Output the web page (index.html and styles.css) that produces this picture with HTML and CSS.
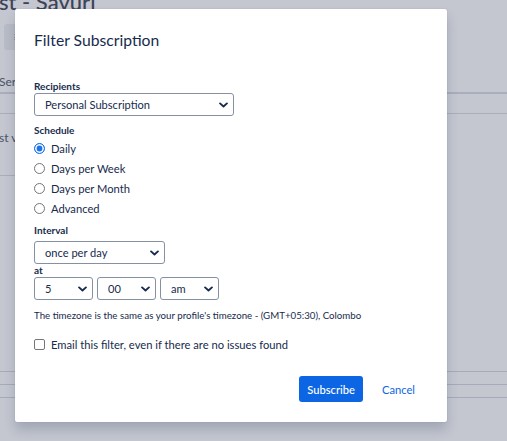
FILE: index.html
```html
<!DOCTYPE html>
<html lang="en">
<head>
<meta charset="utf-8">
<title>Filter Subscription</title>
<link rel="stylesheet" href="styles.css">
</head>
<body>
<div class="page">
  <h1 class="page-title">st - Savuri</h1>
  <div class="toolbar"><span class="tool-btn">&#8801;</span></div>
  <div class="tabs"><span class="tab">Ser</span></div>
  <div class="sub-bar"></div>
  <div class="left-col">
    <p class="left-text">st v</p>
  </div>
  <div class="table-lines">
    <div class="tline"></div>
    <div class="tline"></div>
    <div class="tline"></div>
  </div>
</div>

<div class="modal" role="dialog" aria-labelledby="modal-title">
  <h2 class="modal-title" id="modal-title">Filter Subscription</h2>
  <form class="form">
    <div class="label">Recipients</div>
    <div class="select select-wide">
      <span>Personal Subscription</span>
      <svg class="chev" viewBox="0 0 10 6" width="9" height="6"><path d="M1.2 1.2 L5 4.6 L8.8 1.2" /></svg>
    </div>

    <div class="label label-gap">Schedule</div>
    <div class="radios">
      <label class="radio-row"><span class="radio checked"></span>Daily</label>
      <label class="radio-row"><span class="radio"></span>Days per Week</label>
      <label class="radio-row"><span class="radio"></span>Days per Month</label>
      <label class="radio-row"><span class="radio"></span>Advanced</label>
    </div>

    <div class="label label-gap2">Interval</div>
    <div class="select select-mid">
      <span>once per day</span>
      <svg class="chev" viewBox="0 0 10 6" width="9" height="6"><path d="M1.2 1.2 L5 4.6 L8.8 1.2" /></svg>
    </div>
    <div class="label label-at">at</div>
    <div class="time-row">
      <div class="select select-small">
        <span>5</span>
        <svg class="chev" viewBox="0 0 10 6" width="9" height="6"><path d="M1.2 1.2 L5 4.6 L8.8 1.2" /></svg>
      </div>
      <div class="select select-small">
        <span>00</span>
        <svg class="chev" viewBox="0 0 10 6" width="9" height="6"><path d="M1.2 1.2 L5 4.6 L8.8 1.2" /></svg>
      </div>
      <div class="select select-small">
        <span>am</span>
        <svg class="chev" viewBox="0 0 10 6" width="9" height="6"><path d="M1.2 1.2 L5 4.6 L8.8 1.2" /></svg>
      </div>
    </div>

    <p class="helper">The timezone is the same as your profile's timezone - (GMT+05:30), Colombo</p>

    <label class="check-row"><span class="checkbox"></span>Email this filter, even if there are no issues found</label>
  </form>
  <div class="footer">
    <button class="btn btn-primary" type="button">Subscribe</button>
    <button class="btn btn-link" type="button">Cancel</button>
  </div>
</div>
</body>
</html>
```

FILE: styles.css
```css
* { box-sizing: border-box; }

html, body {
  margin: 0;
  padding: 0;
}

body {
  width: 507px;
  height: 441px;
  overflow: hidden;
  background: #c4c7d0;
  font-family: "Lato", "Liberation Sans", sans-serif;
  color: #172b4d;
  position: relative;
}

/* ---------- background page (dimmed) ---------- */
.page {
  height: 100%;
  display: flex;
  flex-direction: column;
}

.page-title {
  margin: -9px 0 0 -1px;
  font-size: 22px;
  line-height: 22px;
  font-weight: 500;
  color: #3c4457;
  white-space: nowrap;
}

.toolbar {
  margin-top: 11px;
  padding-left: 4px;
  height: 26px;
  display: flex;
}

.tool-btn {
  width: 30px;
  height: 26px;
  background: #b8bcc6;
  border-radius: 3px;
  color: #8d93a2;
  font-size: 14px;
  line-height: 26px;
  padding-left: 9px;
}

.tabs {
  margin-top: 20px;
  height: 24px;
  border-bottom: 2px solid #a9aebb;
  display: flex;
  align-items: center;
}

.tab {
  margin-left: -1px;
  font-size: 12px;
  color: #4c5466;
}

.sub-bar {
  height: 20px;
  border-bottom: 1px solid #a9aebb;
}

.left-col {
  width: 30px;
  height: 62px;
  border-bottom: 1px solid #a9aebb;
}

.left-text {
  margin: 17px 0 0 -1px;
  font-size: 12px;
  line-height: 14px;
  color: #4c5466;
  white-space: nowrap;
}

.table-lines {
  margin-top: 195px;
}

.tline {
  height: 13px;
  border-top: 1px solid #a6abb9;
}

/* ---------- modal ---------- */
.modal {
  position: absolute;
  left: 15px;
  top: 9px;
  width: 432px;
  height: 413px;
  background: #fff;
  border-radius: 2px;
  box-shadow: 0 8px 12px rgba(9, 30, 66, 0.18), 0 0 1px rgba(9, 30, 66, 0.3);
  padding: 21px 20px 20px 19px;
  display: flex;
  flex-direction: column;
}

.modal-title {
  margin: 0;
  font-size: 15.7px;
  line-height: 20px;
  font-weight: 400;
  color: #172b4d;
}

.form {
  margin-top: 30px;
  display: flex;
  flex-direction: column;
  align-items: flex-start;
  flex: 1;
}

.label {
  font-size: 10px;
  line-height: 13px;
  font-weight: 700;
  color: #172b4d;
}

.label-gap { margin-top: 8px; }
.label-gap2 { margin-top: 6px; }
.label-at { margin-top: 0; }
.label-gap2 + .select { margin-top: 4px; }

.select {
  height: 23px;
  border: 1px solid #8590a2;
  border-radius: 3px;
  display: flex;
  align-items: center;
  justify-content: space-between;
  padding: 0 5px 0 10px;
  font-size: 11.1px;
  color: #172b4d;
  background: #fff;
}

.select-wide { width: 200px; }
.select-mid { width: 131px; }
.select-small { width: 59px; }

.chev {
  display: block;
  fill: none;
  stroke: #172b4d;
  stroke-width: 2.1;
  stroke-linecap: round;
  stroke-linejoin: round;
}

.radios {
  margin-top: 1px;
  display: flex;
  flex-direction: column;
}

.radio-row {
  height: 20px;
  display: flex;
  align-items: center;
  gap: 6px;
  font-size: 11.2px;
  color: #172b4d;
}

.radio {
  width: 11px;
  height: 11px;
  border: 1px solid #767676;
  border-radius: 50%;
  background: #fff;
}

.radio.checked {
  border: 1.5px solid #1a73e8;
  background: #1a73e8;
  box-shadow: inset 0 0 0 1.6px #fff;
}

.time-row {
  display: flex;
  gap: 4px;
}

.helper {
  margin: 9px 0 0;
  font-size: 9.7px;
  line-height: 13px;
  color: #172b4d;
}

.check-row {
  margin-top: 12px;
  height: 20px;
  display: flex;
  align-items: center;
  gap: 6px;
  font-size: 11.2px;
  color: #172b4d;
}

.checkbox {
  width: 11px;
  height: 11px;
  border: 1px solid #767676;
  border-radius: 2px;
  background: #fff;
}

.footer {
  display: flex;
  justify-content: flex-end;
  gap: 7px;
}

.btn {
  height: 26px;
  border: 0;
  border-radius: 3px;
  font-family: inherit;
  font-size: 11.2px;
  cursor: pointer;
}

.btn-primary {
  background: #0c66e4;
  color: #fff;
  font-weight: 500;
  padding: 0 8px;
}

.btn-link {
  background: transparent;
  color: #0c66e4;
  padding: 0 12px;
}
```
